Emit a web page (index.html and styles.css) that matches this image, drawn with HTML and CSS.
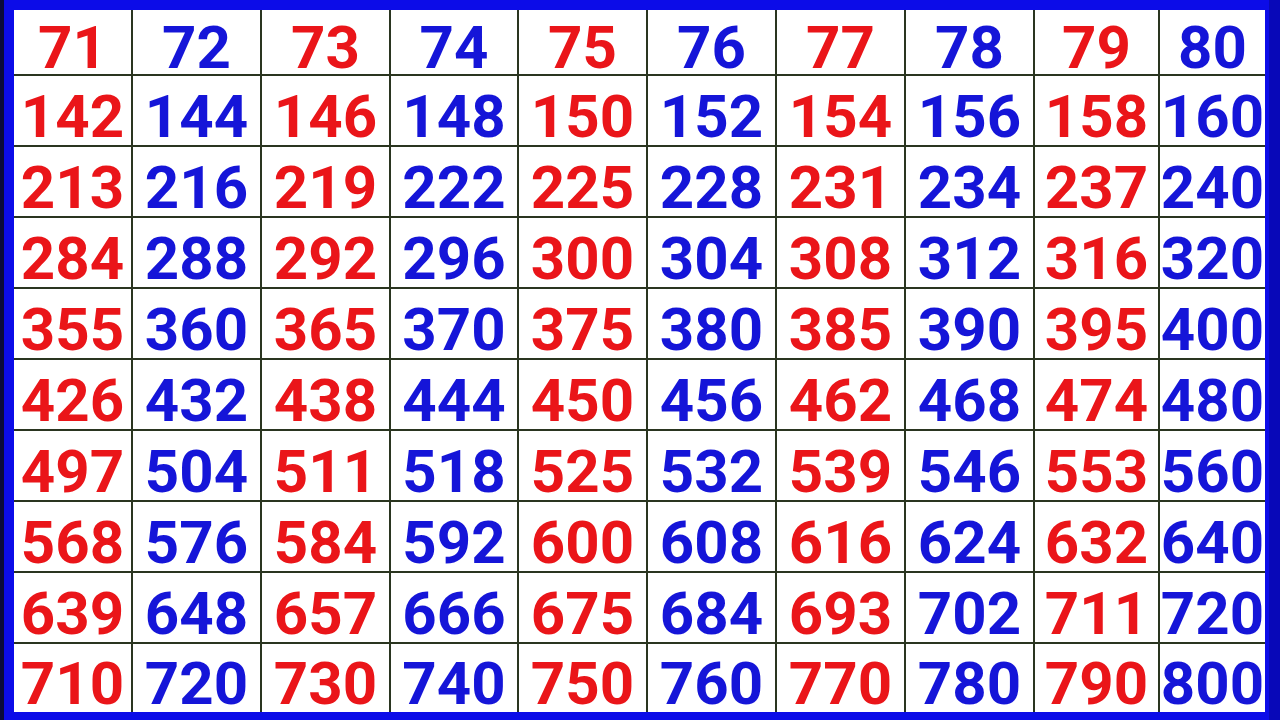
FILE: index.html
```html
<!DOCTYPE html>
<html>
<head>
<meta charset="utf-8">
<link rel="stylesheet" href="styles.css">
</head>
<body>
<div class="frame">
  <div class="grid">
    <div class="cell r">71</div><div class="cell b">72</div><div class="cell r">73</div><div class="cell b">74</div><div class="cell r">75</div><div class="cell b">76</div><div class="cell r">77</div><div class="cell b">78</div><div class="cell r">79</div><div class="cell b">80</div>
    <div class="cell r">142</div><div class="cell b">144</div><div class="cell r">146</div><div class="cell b">148</div><div class="cell r">150</div><div class="cell b">152</div><div class="cell r">154</div><div class="cell b">156</div><div class="cell r">158</div><div class="cell b">160</div>
    <div class="cell r">213</div><div class="cell b">216</div><div class="cell r">219</div><div class="cell b">222</div><div class="cell r">225</div><div class="cell b">228</div><div class="cell r">231</div><div class="cell b">234</div><div class="cell r">237</div><div class="cell b">240</div>
    <div class="cell r">284</div><div class="cell b">288</div><div class="cell r">292</div><div class="cell b">296</div><div class="cell r">300</div><div class="cell b">304</div><div class="cell r">308</div><div class="cell b">312</div><div class="cell r">316</div><div class="cell b">320</div>
    <div class="cell r">355</div><div class="cell b">360</div><div class="cell r">365</div><div class="cell b">370</div><div class="cell r">375</div><div class="cell b">380</div><div class="cell r">385</div><div class="cell b">390</div><div class="cell r">395</div><div class="cell b">400</div>
    <div class="cell r">426</div><div class="cell b">432</div><div class="cell r">438</div><div class="cell b">444</div><div class="cell r">450</div><div class="cell b">456</div><div class="cell r">462</div><div class="cell b">468</div><div class="cell r">474</div><div class="cell b">480</div>
    <div class="cell r">497</div><div class="cell b">504</div><div class="cell r">511</div><div class="cell b">518</div><div class="cell r">525</div><div class="cell b">532</div><div class="cell r">539</div><div class="cell b">546</div><div class="cell r">553</div><div class="cell b">560</div>
    <div class="cell r">568</div><div class="cell b">576</div><div class="cell r">584</div><div class="cell b">592</div><div class="cell r">600</div><div class="cell b">608</div><div class="cell r">616</div><div class="cell b">624</div><div class="cell r">632</div><div class="cell b">640</div>
    <div class="cell r">639</div><div class="cell b">648</div><div class="cell r">657</div><div class="cell b">666</div><div class="cell r">675</div><div class="cell b">684</div><div class="cell r">693</div><div class="cell b">702</div><div class="cell r">711</div><div class="cell b">720</div>
    <div class="cell r">710</div><div class="cell b">720</div><div class="cell r">730</div><div class="cell b">740</div><div class="cell r">750</div><div class="cell b">760</div><div class="cell r">770</div><div class="cell b">780</div><div class="cell r">790</div><div class="cell b">800</div>
  </div>
</div>
</body>
</html>
```

FILE: styles.css
```css
html, body {
  margin: 0;
  padding: 0;
  width: 1280px;
  height: 720px;
  overflow: hidden;
}

.frame {
  box-sizing: border-box;
  width: 1280px;
  height: 720px;
  background: #0c0ce8;
  border-left: 4px solid #0a0a3a;
  border-right: 11px solid #0808b8;
  padding: 10px 4px 8px 10px;
}

.grid {
  display: grid;
  grid-template-columns: 119px 129px 129px 128px 129px 129px 129px 129px 125px 105px;
  grid-template-rows: 66px 71px 71px 71px 71px 71px 71px 71px 71px 68px;
  background: #ffffff;
  width: 1251px;
  height: 702px;
}

.cell {
  box-sizing: border-box;
  border-right: 2px solid #2a3520;
  border-bottom: 2px solid #2a3520;
  display: flex;
  align-items: center;
  justify-content: center;
  padding-top: 12px;
  font-family: Roboto, "Liberation Sans", sans-serif;
  font-weight: 700;
  font-size: 60px;
  line-height: 1;
  white-space: nowrap;
  background: #ffffff;
}

.cell:nth-child(10n) {
  border-right: none;
}

.cell:nth-child(n+91) {
  border-bottom: none;
}

.r {
  color: #ea1519;
}

.b {
  color: #1515d8;
}
```
